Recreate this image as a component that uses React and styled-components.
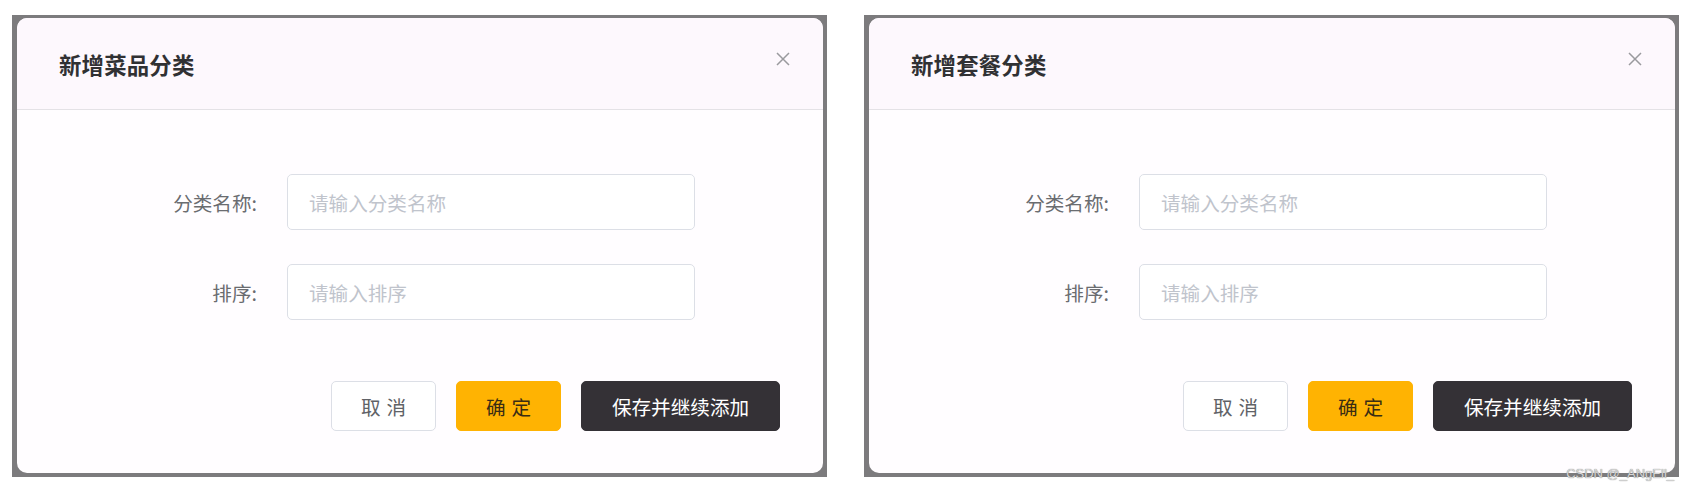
import React from "react";
import styled, { createGlobalStyle } from "styled-components";

const GlobalStyle = createGlobalStyle`
  html, body {
    margin: 0;
    padding: 0;
    background: #ffffff;
  }
  body {
    font-family: "Noto Sans CJK SC", "Noto Sans", "Liberation Sans", sans-serif;
  }
`;

const Page = styled.div`
  position: relative;
  width: 1696px;
  height: 490px;
  display: flex;
  gap: 37px;
  padding: 15px 0 0 12px;
  box-sizing: border-box;
`;

const Frame = styled.div`
  width: 815px;
  height: 462px;
  box-sizing: border-box;
  background: #7c7b7d;
  padding: 3px 4px 4px 5px;
`;

const Card = styled.div`
  height: 100%;
  background: #fffdff;
  border-radius: 10px;
  overflow: hidden;
  display: flex;
  flex-direction: column;
`;

const Header = styled.div`
  height: 92px;
  box-sizing: border-box;
  background: #fdf8fd;
  border-bottom: 1px solid #e4e2e6;
  display: flex;
  align-items: center;
  justify-content: space-between;
  padding: 0 33px 0 42px;
`;

const Title = styled.div`
  font-size: 22.4px;
  font-weight: 700;
  color: #303133;
  letter-spacing: 0.2px;
`;

const CloseBtn = styled.div`
  width: 14px;
  height: 14px;
  display: flex;
  margin-bottom: 9px;
  cursor: pointer;
`;

const Form = styled.div`
  display: grid;
  grid-template-columns: 160px 408px;
  column-gap: 30px;
  row-gap: 34px;
  align-items: center;
  padding: 64px 0 0 80px;
`;

const Label = styled.label`
  text-align: right;
  font-size: 19.6px;
  color: #6a6c70;
`;

const Input = styled.input`
  height: 56px;
  box-sizing: border-box;
  border: 1px solid #dcdfe6;
  border-radius: 5px;
  background: #ffffff;
  padding: 0 21px;
  font-family: inherit;
  font-size: 19.6px;
  color: #606266;
  outline: none;
  &::placeholder {
    color: #c0c4cc;
  }
`;

const Footer = styled.div`
  display: flex;
  justify-content: flex-end;
  gap: 20px;
  padding: 61px 43px 0 0;
`;

const Button = styled.button`
  height: 50px;
  width: ${props => props.w}px;
  box-sizing: border-box;
  border-radius: 5px;
  font-family: inherit;
  font-size: 19.6px;
  letter-spacing: ${props => (props.spaced ? "6px" : "0")};
  text-indent: ${props => (props.spaced ? "6px" : "0")};
  border: 1px solid ${props => props.border};
  background: ${props => props.bg};
  color: ${props => props.color};
  cursor: pointer;
  padding: 0;
`;

const Watermark = styled.div`
  position: absolute;
  right: 22px;
  bottom: 9px;
  font-family: "Liberation Sans", Arial, sans-serif;
  font-size: 13px;
  color: #d6d6d6;
  text-shadow: 0 0 1px #6d6d6d;
`;

function Dialog({ title }) {
  return (
    <Frame>
      <Card>
        <Header>
          <Title>{title}</Title>
          <CloseBtn>
            <svg width="14" height="14" viewBox="0 0 14 14">
              <path
                d="M1 1L13 13M13 1L1 13"
                stroke="#9a9a9e"
                strokeWidth="1.5"
                fill="none"
              />
            </svg>
          </CloseBtn>
        </Header>
        <Form>
          <Label>分类名称:</Label>
          <Input placeholder="请输入分类名称" />
          <Label>排序:</Label>
          <Input placeholder="请输入排序" />
        </Form>
        <Footer>
          <Button w={105} spaced bg="#ffffff" border="#dcdfe6" color="#606266">
            取消
          </Button>
          <Button w={105} spaced bg="#ffb302" border="#ffb302" color="#3a2d14">
            确定
          </Button>
          <Button w={199} bg="#343136" border="#343136" color="#ffffff">
            保存并继续添加
          </Button>
        </Footer>
      </Card>
    </Frame>
  );
}

export default function App() {
  return (
    <>
      <GlobalStyle />
      <Page>
        <Dialog title="新增菜品分类" />
        <Dialog title="新增套餐分类" />
        <Watermark>CSDN @_ANgEll_</Watermark>
      </Page>
    </>
  );
}
